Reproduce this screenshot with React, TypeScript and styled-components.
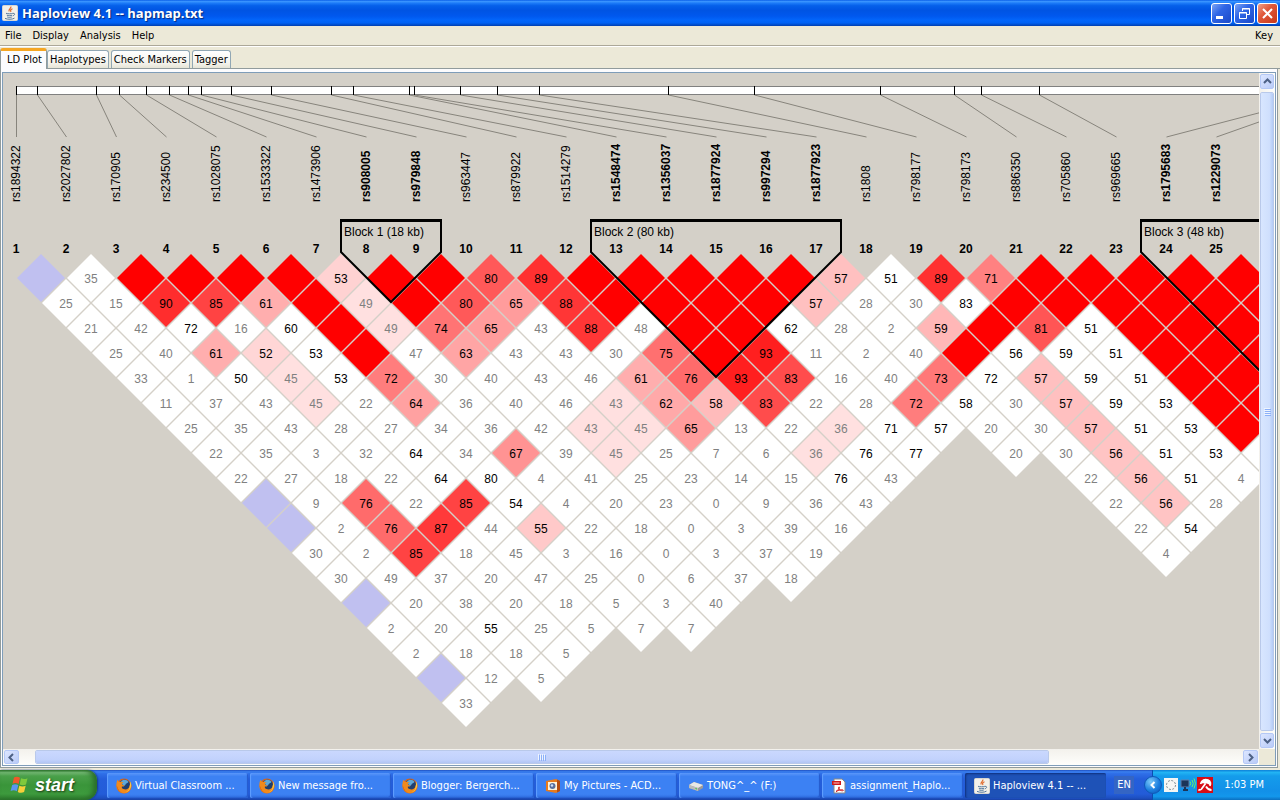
import React from "react";
import styled, { createGlobalStyle, css } from "styled-components";

const GlobalStyle = createGlobalStyle`
  * { box-sizing: border-box; }
  html, body { margin: 0; padding: 0; overflow: hidden; }
  body, button {
    font-family: "DejaVu Sans Condensed", "DejaVu Sans", "Noto Sans", sans-serif;
    font-size: 11px;
    line-height: 14px;
  }
  button { margin: 0; padding: 0; border: 0; background: none; color: inherit; }
  svg { display: block; }
`;

const Desktop = styled.div`
  display: flex;
  flex-direction: column;
  height: 100vh;
  background: #ece9d8;
  color: #000;
`;

/* ---------- title bar ---------- */

const TitleBar = styled.header`
  display: flex;
  align-items: center;
  height: 26px;
  padding: 0 2px 0 2px;
  background: linear-gradient(
    #0a5fe8 0%, #3a95ff 6%, #1c7bf8 12%, #0560ea 22%, #0054e3 40%,
    #0058ee 62%, #0266fb 78%, #0062f4 88%, #004bc8 96%, #003dae 100%
  );
`;

const Title = styled.h1`
  flex: 1;
  margin: 0 0 0 4px;
  font: bold 13px/18px "Noto Sans", "Open Sans", sans-serif;
  font-family: "Open Sans", "Noto Sans", sans-serif;
  color: #fff;
  text-shadow: 1px 1px 1px #0a2a7a;
`;

const WindowButtons = styled.div`
  display: flex;
  gap: 2px;
`;

const WindowButton = styled.button<{ $close?: boolean }>`
  width: 21px;
  height: 21px;
  border: 1px solid #fff;
  border-radius: 3px;
  background: ${(p) =>
    p.$close
      ? "linear-gradient(135deg, #f0a088 0%, #e0583a 40%, #c8381a 100%)"
      : "linear-gradient(135deg, #7ca4f4 0%, #2f66e6 40%, #1a48c8 100%)"};
`;

/* ---------- menu ---------- */

const MenuBar = styled.nav`
  display: flex;
  align-items: center;
  height: 19px;
  padding: 0 7px 0 5px;
`;

const MenuItem = styled.button<{ $right?: boolean }>`
  margin-right: ${(p) => (p.$right ? 0 : "11px")};
  margin-left: ${(p) => (p.$right ? "auto" : 0)};
`;

const MenuRule = styled.div`
  height: 2px;
  border-top: 1px solid #aca899;
  border-bottom: 1px solid #fff;
`;

/* ---------- tabs ---------- */

const TabStrip = styled.div`
  display: flex;
  align-items: flex-end;
  gap: 2px;
  height: 22px;
  border-bottom: 1px solid #919b9c;
`;

const Tab = styled.button<{ $active?: boolean }>`
  height: 18px;
  padding: 0 2px;
  border: 1px solid #91a7b4;
  border-bottom: 0;
  border-radius: 3px 3px 0 0;
  background: linear-gradient(#fff, #f4f3ec 70%, #e6e4d6);
  ${(p) =>
    p.$active &&
    css`
      height: 21px;
      padding: 0 4px 0 6px;
      margin: 0 -2px -1px 0;
      border-top: 3px solid #f5a623;
      border-color: #f5a623 #919b9c #919b9c;
      background: #fcfcfe;
    `}
`;

const TabPage = styled.main`
  display: flex;
  flex: 1;
  min-height: 0;
  margin-right: 2px;
  padding: 3px 1px 1px 1px;
  border: 1px solid #919b9c;
  border-top: 0;
  background: #fcfcfe;
`;

const ScrollPane = styled.section`
  display: grid;
  flex: 1;
  min-width: 0;
  grid-template: minmax(0, 1fr) 16px / minmax(0, 1fr) 16px;
  border: 1px solid #7f9db9;
  background: #ece9d8;
`;

const Viewport = styled.div`
  overflow: hidden;
  background: #d4d0c8;
`;

/* ---------- scroll bars ---------- */

const Bar = styled.div<{ $vertical?: boolean }>`
  display: flex;
  flex-direction: ${(p) => (p.$vertical ? "column" : "row")};
  padding: 1px;
  background: ${(p) =>
    p.$vertical
      ? "linear-gradient(90deg, #f3f1ec, #fefefb)"
      : "linear-gradient(#f3f1ec, #fefefb)"};
`;

const Arrow = styled.button`
  display: grid;
  place-items: center;
  flex: 0 0 15px;
  min-width: 14px;
  min-height: 14px;
  border: 1px solid #b4c8f6;
  border-radius: 2px;
  background: linear-gradient(135deg, #dce6ff, #b9cbf8);
`;

const Track = styled.div<{ $vertical?: boolean }>`
  display: grid;
  flex: 1;
  ${(p) =>
    p.$vertical
      ? "padding: 3px 0 2px;"
      : "grid-template-columns: 1014fr 194fr; padding-left: 16px;"}
`;

const Thumb = styled.div<{ $vertical?: boolean }>`
  display: grid;
  place-items: center;
  border: 1px solid #fff;
  border-radius: 2px;
  outline: 1px solid #b9c9ea;
  outline-offset: -1px;
  background: ${(p) =>
    p.$vertical
      ? "linear-gradient(90deg, #d8e6ff, #cfdffd 70%, #b4ccf6)"
      : "linear-gradient(#cad8fe, #c2d2fc 70%, #b2c6f4)"};
`;

/* ---------- LD plot ---------- */

const Plot = styled.svg`
  font: 12px "Liberation Sans", Arial, sans-serif;
`;

const MarkerText = styled.text<{ $bold?: boolean }>`
  font-weight: ${(p) => (p.$bold ? "bold" : "normal")};
`;

const Centered = styled.text<{ $bold?: boolean; $faint?: boolean }>`
  text-anchor: middle;
  font-weight: ${(p) => (p.$bold ? "bold" : "normal")};
  fill: ${(p) => (p.$faint ? "#808080" : "#000")};
`;

const STEP = 50;
const LEFT = 13;
const CELL_TOP = 205;
const HALF = 24;

const MARKERS = [
  "rs1894322", "rs2027802", "rs170905", "rs234500", "rs1028075", "rs1533322",
  "rs1473906", "rs908005", "rs979848", "rs963447", "rs879922", "rs1514279",
  "rs1548474", "rs1356037", "rs1877924", "rs997294", "rs1877923", "rs1808",
  "rs798177", "rs798173", "rs886350", "rs705860", "rs969665", "rs1795683",
  "rs1229073",
];

const POSITIONS = [
  13, 34, 93, 116, 143, 166, 185, 198, 228, 268, 328, 350, 406, 411, 457, 494,
  536, 665, 751, 877, 951, 978, 1036, 1324, 1332,
];

const BLOCKS = [
  { first: 8, last: 9, label: "Block 1 (18 kb)" },
  { first: 13, last: 17, label: "Block 2 (80 kb)" },
  { first: 24, last: 30, label: "Block 3 (48 kb)" },
];

// One string per marker distance. R: D' = 1, B: D' = 1 with low LOD,
// * after a value: high LOD, _: blank white cell, dot: no comparison.
const ROWS = [
  "B 35 R R R R 53* R R 80* 89* R R R R R 57* 51 89* 71* R R R R R",
  "25 15 90* 85* 61* R 49* R 80* 65* 88* R R R R 57* 28 30 83 R R R R R R",
  "21 42 72 16 60 R 49* 74* 65* 43 88* 48 R R 62 28 2 59* R 81* 51 R R R",
  "25 40 61* 52* 53 R 47 63* 43 43 30 75* R 93* 11 2 40 R 56 59 51 R R R",
  "33 1 50 45* 53 72* 30 40 43 46 61* 76* 93* 83* 16 40 73* 72 57* 59 51 R R",
  "11 37 43 45* 22 64* 36 40 46 43* 62* 58* 83* 22 28 72* 58 30 57* 59 53 R R",
  "25 35 43 28 27 34 36 42 43* 45* 65* 13 22 36* 71 57 20 30 57* 51 53 R",
  "22 35 3 32 64 34 67* 39 45* 25 7 6 36* 76 77 . 20 30 56* 51 53 _",
  "22 27 18 22 64 80 4 41 25 23 14 15 76 43 . . . 22 56* 51 4",
  "B 9 76* 22 85* 54 4 20 23 0 9 36 43 . . . . 22 56* 28",
  "B 2 76* 87* 44 55* 22 18 0 3 39 16 . . . . . 22 54",
  "30 2 85* 18 45 3 16 0 3 37 19 . . . . . . 4",
  "30 49 37 20 47 25 0 6 37 18",
  "B 20 38 20 18 5 3 40",
  "2 20 55 25 5 7 7",
  "2 18 18 5",
  "B 12 5",
  "33",
].map((r) => r.split(" "));

function cellColor(code: string) {
  if (code === "R") return "#ff0000";
  if (code === "B") return "#c0c0f0";
  if (!code.endsWith("*")) return "#ffffff";
  const v = parseInt(code, 10);
  const c = v < 50 ? 224 : Math.round((100 - v) * 4.46);
  return `rgb(255, ${c}, ${c})`;
}

function LdPlot() {
  const inBlock = (n: number) => BLOCKS.some((b) => n >= b.first && n <= b.last);
  return (
    <Plot width="1500" height="670" role="img" aria-label="LD plot">
      <rect x="13.5" y="13.5" width="1500" height="8" fill="#fff" stroke="#808080" />
      {POSITIONS.map((p, i) => (
        <g key={i}>
          <path d={`M${p + 0.5} 22 L${LEFT + STEP * i + 0.5} 64`} stroke="#87847c" fill="none" />
          <path d={`M${p + 0.5} 13 V22`} stroke="#000" />
        </g>
      ))}
      {MARKERS.map((name, i) => {
        const x = LEFT + STEP * i;
        return (
          <g key={name}>
            <MarkerText $bold={inBlock(i + 1)} transform={`translate(${x + 4} 129) rotate(-90)`}>
              {name}
            </MarkerText>
            <Centered $bold x={x} y="180">
              {i + 1}
            </Centered>
          </g>
        );
      })}
      {ROWS.map((row, d) =>
        row.map((code, i) => {
          if (code === ".") return null;
          const x = LEFT + 25 * (2 * i + d + 1);
          const y = CELL_TOP + 25 * d;
          const value = parseInt(code, 10);
          return (
            <g key={`${d}-${i}`}>
              <path
                d={`M${x} ${y - HALF} l${HALF} ${HALF} l-${HALF} ${HALF} l-${HALF} -${HALF}z`}
                fill={cellColor(code)}
              />
              {!Number.isNaN(value) && (
                <Centered $faint={value < 50} x={x} y={y + 5}>
                  {value}
                </Centered>
              )}
            </g>
          );
        })
      )}
      {BLOCKS.map((b) => {
        const x1 = LEFT + STEP * (b.first - 1) - 25;
        const x2 = LEFT + STEP * (b.last - 1) + 25;
        const half = (x2 - x1) / 2;
        return (
          <g key={b.label}>
            <path
              d={`M${x1} 147 V179 L${x1 + half} ${179 + half} L${x2} 179 V147`}
              fill="none"
              stroke="#000"
              strokeWidth="2"
            />
            <path d={`M${x1 - 1} 147.5 H${x2 + 1}`} stroke="#000" strokeWidth="3" />
            <text x={x1 + 3} y="163">
              {b.label}
            </text>
          </g>
        );
      })}
    </Plot>
  );
}

/* ---------- icons ---------- */

const JavaIcon = () => (
  <svg width="16" height="16" viewBox="0 0 16 16" fill="none" aria-hidden="true">
    <rect x="0.5" y="0.5" width="15" height="15" rx="1" fill="#f2f0ea" stroke="#d8d6d0" />
    <path d="M8.8 1.5c1 1.8-3 2.600-1.600 5M10.500 3.800c-2 .9-2.400 1.600-1.500 3.200" stroke="#e0692a" strokeWidth="1.200" />
    <path d="M4 8.300c2.200.7 5 .7 6.800 0M4.800 10.200c1.800.6 3.800.6 5.400 0M5.200 12c1.600.5 3.200.5 4.600 0M3 13.400c2.400 1.200 7.800 1.100 9.500-.3M11 8.400c2-.5 2.300 1.500-.2 2.600" stroke="#53779c" />
  </svg>
);

const FirefoxIcon = () => (
  <svg width="16" height="16" viewBox="0 0 16 16" aria-hidden="true">
    <circle cx="8" cy="8" r="7.500" fill="#d9641a" />
    <circle cx="8.500" cy="7" r="5.500" fill="#1f3f70" />
    <path d="M5 3.500C7 1 11 1.500 12.500 4c-1 1.500-2.500 1-3 2.500S7 8.500 6.500 6.500z" fill="#5fa8d8" />
    <path d="M1.500 1.500C.2 4.800 0 8 1 10.900c2.100 4.200 8 5.600 11.500 2.900 3-2.400 3.900-7 1.700-10.600.2 2.600 0 3.700-.7 4.900-.4 2.900-3.500 4-6 3-1.500-.6-2-1.800-1.500-2.600 1 .2 2 0 2.600-.8-1.300-.4-2.600-.8-2.700-2.200.5-.7 1-.9 1.800-1.200C6.500 3.800 4.800 3.400 3.700 4 2.600 3.700 2 2.800 1.500 1.500z" fill="#f08a1c" />
    <path d="M14.200 3.600c2 4.400-.2 9.400-4.600 10.800 3-1.800 4.300-4.200 4.300-7z" fill="#f9d24a" />
    <path d="M.8 7.500c.2 4 2.600 6.600 6.200 7.500C3.500 14.200 1.600 11.400.8 7.500z" fill="#b8380c" />
  </svg>
);

const AcdIcon = () => (
  <svg width="16" height="16" viewBox="0 0 16 16" aria-hidden="true">
    <path d="M1 3l10-2 4 2v10l-4 2-10-2z" fill="#e87b1c" />
    <path d="M3 4h9v8H3z" fill="#fff4dc" />
    <circle cx="7.500" cy="8" r="3" fill="#5a6f9c" />
    <circle cx="7" cy="7.500" r="1.200" fill="#cfe0f8" />
    <path d="M12 1.600l3 1.400v10l-3 1.600z" fill="#b64d10" />
  </svg>
);

const DriveIcon = () => (
  <svg width="16" height="16" viewBox="0 0 16 16" aria-hidden="true">
    <path d="M1 7l5-3 9 3v3l-5 3-9-3z" fill="#9a9a9a" />
    <path d="M1 7l5-3 9 3-5 3z" fill="#e8e8e6" />
    <path d="M1 7l9 3v3l-9-3z" fill="#bdbdbb" />
    <path d="M7.500 10.500l1.500.5" stroke="#3c3" />
  </svg>
);

const PdfIcon = () => (
  <svg width="16" height="16" viewBox="0 0 16 16" aria-hidden="true">
    <path d="M3 1h8l3 3v11H3z" fill="#fff" stroke="#888" />
    <path d="M1 3h9v4H1z" fill="#d01818" />
    <path d="M2.500 5h6" stroke="#f4c8c8" />
    <path d="M5 13.500c2.500-1.500 3.500-3.500 3.200-4.500-.4-.8-1 1 .3 2.500 1 1.200 3 1.600 3.800 1 .5-1-2.800-1.200-7.300 1z" stroke="#d01818" fill="none" />
  </svg>
);

const FlagIcon = () => (
  <svg width="20" height="18" viewBox="0 0 20 18" aria-hidden="true">
    <path d="M4 1.500c2-1.200 4-1 6 .2L8.600 8C6.600 6.900 4.800 6.800 2.500 7.800z" fill="#f0582a" />
    <path d="M11 2.200c2 1 4 1.200 6.500 0L16 8.500c-2.200 1.100-4.300.9-6.300-.1z" fill="#7fc93c" />
    <path d="M2.200 8.900c2.200-1 4.200-.9 6.100.2L6.800 15.300c-2-1.200-4-1.200-6.200-.2z" fill="#5a96f0" />
    <path d="M9.300 9.700c2 1 4.200 1.100 6.400.1l-1.600 6.300c-2.200 1-4.300.9-6.300-.2z" fill="#f8cf3a" />
  </svg>
);

const Chevron = ({ turn }: { turn: number }) => (
  <svg width="9" height="9" viewBox="0 0 9 9" fill="none" aria-hidden="true">
    <path d="M1 6l3.500-3.500L8 6" stroke="#4d6185" strokeWidth="2" transform={`rotate(${turn} 4.500 4.500)`} />
  </svg>
);

const Grip = ({ vertical }: { vertical?: boolean }) => (
  <svg width="8" height="8" viewBox="0 0 8 8" aria-hidden="true">
    <path d={vertical ? "M1 .5h6M1 2.500h6M1 4.500h6M1 6.500h6" : "M.5 1v6M2.500 1v6M4.500 1v6M6.500 1v6"} stroke="#eef4fe" />
    <path d={vertical ? "M2 1.500h6M2 3.500h6M2 5.500h6M2 7.500h6" : "M1.500 2v6M3.500 2v6M5.500 2v6M7.500 2v6"} stroke="#8cb0f8" />
  </svg>
);

/* ---------- task bar ---------- */

const TaskBar = styled.footer`
  display: flex;
  height: 30px;
  margin-top: 2px;
  color: #fff;
  background: linear-gradient(
    #1f4fc0 0%, #3a80f0 6%, #2f6fe8 12%, #245edb 30%, #235cd8 80%, #1d4fc0 94%, #1941a5 100%
  );
`;

const StartButton = styled.button`
  display: flex;
  align-items: center;
  gap: 5px;
  flex: 0 0 97px;
  padding-left: 10px;
  border-radius: 0 10px 12px 0;
  font: italic bold 18px/24px "Liberation Sans", Arial, sans-serif;
  text-shadow: 1px 1px 2px #1c3c14;
  background: linear-gradient(#2f7a2f 0%, #79bd79 8%, #4aa04a 20%, #3a953a 50%, #3d9a3d 80%, #2b762b 100%);
  box-shadow: inset -4px 0 5px #2a6e2a, 1px 0 2px #143a8c;
`;

const Tasks = styled.div`
  display: flex;
  flex: 1;
  min-width: 0;
  gap: 2px;
  padding: 3px 0 2px 10px;
`;

const Task = styled.button<{ $active?: boolean }>`
  display: flex;
  align-items: center;
  gap: 3px;
  flex: 0 1 141px;
  min-width: 0;
  padding-left: 9px;
  border-radius: 2px;
  white-space: nowrap;
  background: ${(p) =>
    p.$active ? "#1e52b7" : "linear-gradient(#5a96fa 0%, #3c81f3 14%, #3c81f3 85%, #2f6ce0 100%)"};
  box-shadow: ${(p) => (p.$active ? "inset 1px 1px 2px #0f307c" : "inset 1px 0 1px #62a0ff, inset -1px -1px 1px #2459cc")};
`;

const Language = styled.button`
  width: 20px;
  margin: 6px 18px 6px 0;
  background: #3465c4;
`;

const Tray = styled.div`
  display: flex;
  align-items: center;
  gap: 1px;
  padding-right: 16px;
  border-left: 1px solid #0b4fb0;
  background: linear-gradient(#0c7fd8 0%, #22b4f4 8%, #149ceb 20%, #1290e8 70%, #1397ec 88%, #0b6fc0 100%);
`;

const TrayToggle = styled.button`
  display: grid;
  place-items: center;
  width: 18px;
  height: 18px;
  margin-left: -9px;
  border-radius: 50%;
  border: 1px solid #0f58b8;
  background: radial-gradient(circle at 35% 30%, #7cc8f8, #1c7fe0 55%, #0b50b0);
`;

const Clock = styled.time`
  margin-left: 10px;
`;

const TASKS = [
  { icon: <FirefoxIcon />, text: "Virtual Classroom ..." },
  { icon: <FirefoxIcon />, text: "New message fro..." },
  { icon: <FirefoxIcon />, text: "Blogger: Bergerch..." },
  { icon: <AcdIcon />, text: "My Pictures - ACD..." },
  { icon: <DriveIcon />, text: "TONG^_^ (F:)" },
  { icon: <PdfIcon />, text: "assignment_Haplo..." },
  { icon: <JavaIcon />, text: "Haploview 4.1 -- ...", active: true },
];

export default function App() {
  return (
    <Desktop>
      <GlobalStyle />
      <TitleBar>
        <JavaIcon />
        <Title>Haploview 4.1 -- hapmap.txt</Title>
        <WindowButtons>
          <WindowButton aria-label="Minimize">
            <svg width="19" height="19" viewBox="0 0 19 19">
              <path d="M4 12h7v3H4z" fill="#fff" />
            </svg>
          </WindowButton>
          <WindowButton aria-label="Restore">
            <svg width="19" height="19" viewBox="0 0 19 19" fill="none" stroke="#fff">
              <path d="M7.500 7V4.500h7v6H12M7 5h8M4.500 8.500h7v6h-7zM4 9h8" />
            </svg>
          </WindowButton>
          <WindowButton aria-label="Close" $close>
            <svg width="19" height="19" viewBox="0 0 19 19" fill="none" stroke="#fff" strokeWidth="2">
              <path d="M5 5l9 9M14 5l-9 9" />
            </svg>
          </WindowButton>
        </WindowButtons>
      </TitleBar>
      <MenuBar>
        <MenuItem>File</MenuItem>
        <MenuItem>Display</MenuItem>
        <MenuItem>Analysis</MenuItem>
        <MenuItem>Help</MenuItem>
        <MenuItem $right>Key</MenuItem>
      </MenuBar>
      <MenuRule />
      <TabStrip role="tablist">
        <Tab role="tab" aria-selected="true" $active>LD Plot</Tab>
        <Tab role="tab" aria-selected="false">Haplotypes</Tab>
        <Tab role="tab" aria-selected="false">Check Markers</Tab>
        <Tab role="tab" aria-selected="false">Tagger</Tab>
      </TabStrip>
      <TabPage>
        <ScrollPane>
          <Viewport>
            <LdPlot />
          </Viewport>
          <Bar $vertical>
            <Arrow aria-label="Scroll up"><Chevron turn={0} /></Arrow>
            <Track $vertical>
              <Thumb $vertical><Grip vertical /></Thumb>
            </Track>
            <Arrow aria-label="Scroll down"><Chevron turn={180} /></Arrow>
          </Bar>
          <Bar>
            <Arrow aria-label="Scroll left"><Chevron turn={-90} /></Arrow>
            <Track>
              <Thumb><Grip /></Thumb>
            </Track>
            <Arrow aria-label="Scroll right"><Chevron turn={90} /></Arrow>
          </Bar>
        </ScrollPane>
      </TabPage>
      <TaskBar>
        <StartButton>
          <FlagIcon />
          start
        </StartButton>
        <Tasks>
          {TASKS.map((t) => (
            <Task key={t.text} $active={t.active}>
              {t.icon}
              {t.text}
            </Task>
          ))}
        </Tasks>
        <Language>EN</Language>
        <Tray>
          <TrayToggle aria-label="Show hidden icons">
            <svg width="8" height="8" viewBox="0 0 8 8" fill="none">
              <path d="M5.500 1L2.500 4l3 3" stroke="#fff" strokeWidth="2" />
            </svg>
          </TrayToggle>
          <svg width="16" height="16" viewBox="0 0 16 16" aria-hidden="true">
            <rect x="1" y="1" width="14" height="14" fill="#f4f6f4" />
            <circle cx="8" cy="8" r="4.500" fill="none" stroke="#7d8a92" strokeDasharray="2 1.500" />
          </svg>
          <svg width="16" height="16" viewBox="0 0 16 16" fill="none" aria-hidden="true">
            <path d="M1 3h8v7H1z" fill="#1c3558" stroke="#5d7fae" />
            <path d="M3 13h5M5 10v3" stroke="#1c3558" strokeWidth="2" />
            <path d="M10 4.500q1.500 2 0 4M12 3q2.500 3.500 0 7M14 1.500q3 5 0 10" stroke="#6cf06c" />
          </svg>
          <svg width="16" height="16" viewBox="0 0 16 16" fill="none" aria-hidden="true">
            <rect width="16" height="16" fill="#d80c14" />
            <path d="M3.500 7C4 3.500 7 2 10 2.500s4 3.500 3 6.500C11.500 7 10 6.200 8.500 6.800 7 6 5 6 3.500 7z" fill="#fff" />
            <path d="M3.500 7C4.500 3 8 1.800 11 3s3 4 2 6" stroke="#fff" strokeWidth="1.500" />
            <path d="M8.500 6.500L4.500 12c-1 1.200-2.500 1-3 .5M9 9.500c1.500 2.500 3 3.500 5.500 3.500" stroke="#fff" strokeWidth="1.800" />
          </svg>
          <Clock>1:03 PM</Clock>
        </Tray>
      </TaskBar>
    </Desktop>
  );
}
